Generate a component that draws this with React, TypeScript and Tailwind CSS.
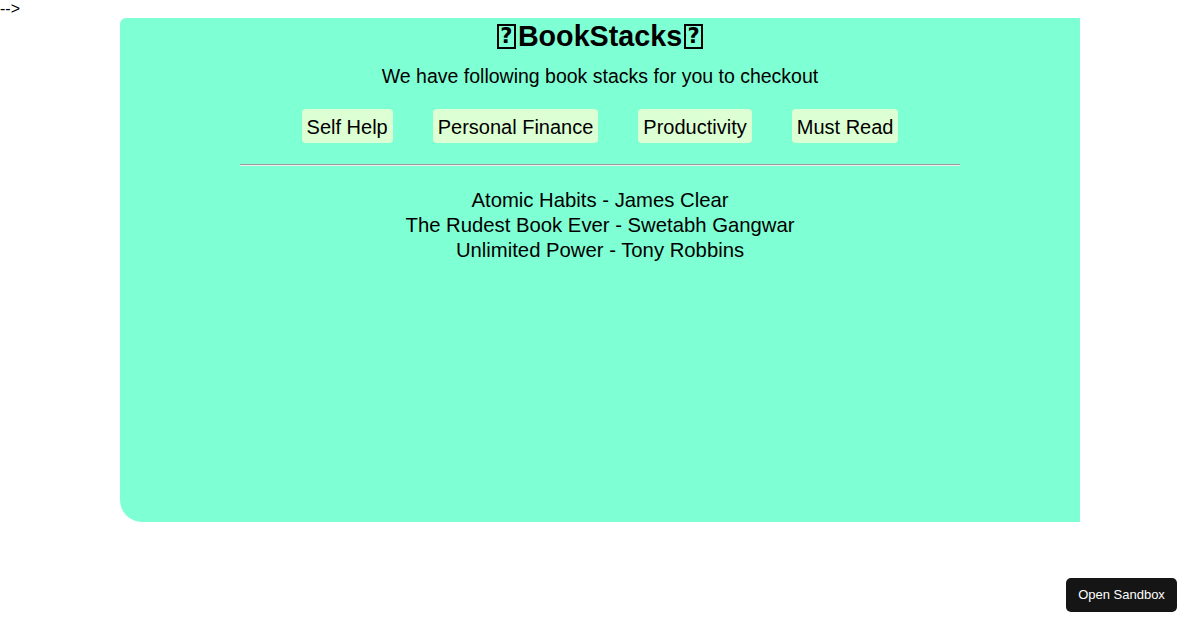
function Tofu() {
  return (
    <span className="inline-flex items-center justify-center w-[19px] h-[25px] border-2 border-black text-[21px] leading-none font-bold mx-[2px]" style={{ fontFamily: '"DejaVu Sans", sans-serif' }}>
      ?
    </span>
  );
}

export default function App() {
  const stacks = ["Self Help", "Personal Finance", "Productivity", "Must Read"];
  const books = [
    "Atomic Habits - James Clear",
    "The Rudest Book Ever - Swetabh Gangwar",
    "Unlimited Power - Tony Robbins",
  ];
  return (
    <div className="min-h-[630px] bg-white text-black" style={{ fontFamily: '"Liberation Sans", Arial, sans-serif' }}>
      <div className="text-[16px] leading-[18px]">--&gt;</div>
      <div className="mx-auto w-[960px] h-[504px] bg-[#7fffd4] rounded-tl-[6px] rounded-bl-[22px] flex flex-col items-center">
        <h1 className="text-[28.7px] font-bold leading-[36px] mt-0 flex items-center">
          <Tofu />
          <span>BookStacks</span>
          <Tofu />
        </h1>
        <p className="text-[19.5px] leading-[23px] mt-[11px]">We have following book stacks for you to checkout</p>
        <div className="flex gap-[40px] mt-[21px]">
          {stacks.map((s) => (
            <button key={s} className="bg-[#ddffd4] rounded-[4px] px-[5px] h-[34px] pt-[2px] text-[20px] leading-[23px]">
              {s}
            </button>
          ))}
        </div>
        <div className="w-[720px] h-0 border-t border-b border-t-[#9a9a9a] border-b-[#eeeeee] mt-[21px]"></div>
        <ul className="mt-[22px] text-[20.3px] leading-[25px] text-center">
          {books.map((b) => (
            <li key={b}>{b}</li>
          ))}
        </ul>
      </div>
      <button className="fixed right-[23px] bottom-[18px] w-[111px] h-[34px] bg-[#151515] rounded-[5px] text-white text-[13px]" style={{ fontFamily: '"Liberation Sans", Arial, sans-serif' }}>
        Open Sandbox
      </button>
    </div>
  );
}
